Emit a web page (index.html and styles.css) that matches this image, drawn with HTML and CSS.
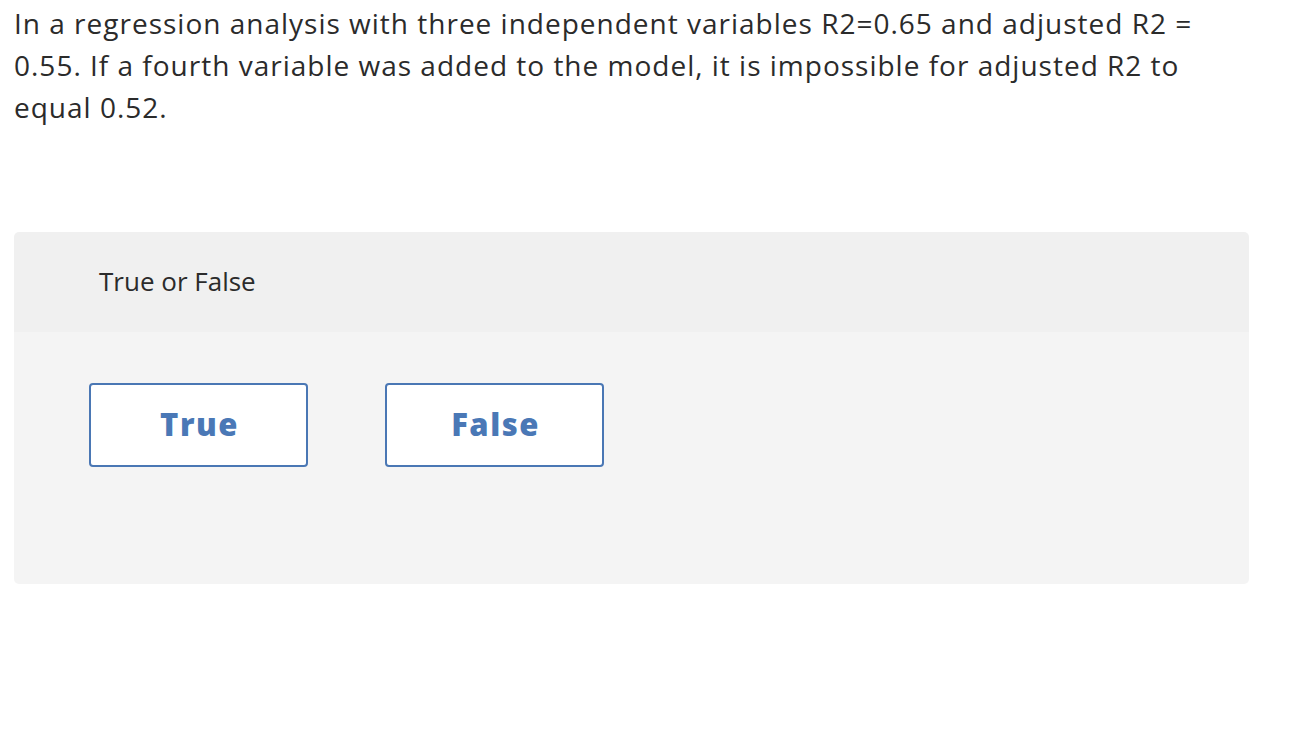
FILE: index.html
```html
<!DOCTYPE html>
<html lang="en">
<head>
	<meta charset="UTF-8">
	<title>Question</title>
	<meta name="viewport" content="width=device-width, initial-scale=1.0">
	<link rel="stylesheet" href="styles.css">
</head>
<body>

	<div class="question">
		<p class="prompt">
			In a regression analysis with three independent variables R2=0.65 and adjusted R2 = 0.55. If a fourth variable was added to the model, it is impossible for adjusted R2 to equal 0.52.
		</p>
		<div class="answer-box">
			<div class="answer-head">True or False</div>
			<div class="answer-body">
				<button class="choice">True</button>
				<button class="choice">False</button>
			</div>
		</div>
	</div>

</body>
</html>
```

FILE: styles.css
```css
body {
	background: #ffffff;
	color: #2b2b2b;
	font-family: "Open Sans", Lato, sans-serif;
	margin: 0;
	padding: 0;
}
.question {
	padding: 0 45px 0 14px;
}
.prompt {
	font-size: 28px;
	letter-spacing: 1px;
	line-height: 42px;
	margin: 2px 0 0;
}
.answer-box {
	border-radius: 5px;
	margin-top: 104px;
	overflow: hidden;
}
.answer-head {
	align-items: center;
	background: #f0f0f0;
	display: flex;
	font-size: 26px;
	height: 100px;
	padding: 0 0 2px 85px;
	box-sizing: border-box;
}
.answer-body {
	background: #f4f4f4;
	display: flex;
	gap: 77px;
	height: 252px;
	padding: 51px 0 0 75px;
	box-sizing: border-box;
}
.choice {
	background: #ffffff;
	border: 2px solid #4a77b4;
	border-radius: 4px;
	color: #4a78b6;
	cursor: pointer;
	font-family: "Open Sans", Lato, sans-serif;
	font-size: 31px;
	font-weight: 800;
	height: 84px;
	letter-spacing: 1.5px;
	padding: 0 0 3px 2px;
	width: 219px;
}
.choice:hover {
	background-color: #f7faff;
}
```
